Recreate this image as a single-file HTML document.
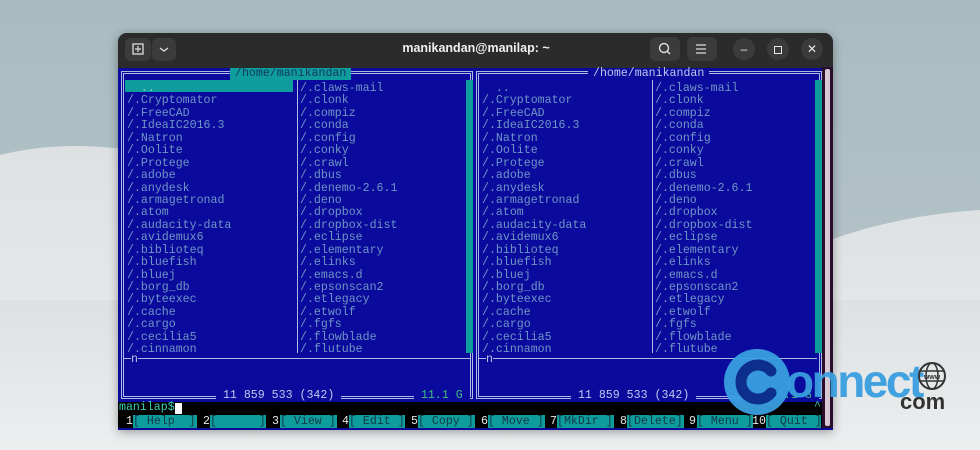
<!DOCTYPE html>
<html><head><meta charset="utf-8"><style>
*{margin:0;padding:0;box-sizing:border-box}
body{width:980px;height:450px;overflow:hidden;position:relative;background:#dfe3e5;font-family:"Liberation Mono",monospace}
.abs{position:absolute}
.t{position:absolute;font-size:11.6px;line-height:12.43px;white-space:pre;color:#7096c6}
.bd{position:absolute;border-color:#b0b8e4;border-style:solid;border-width:0}
.btn{position:absolute;background:#3b3b3b;border-radius:6px}
.cb{position:absolute;width:22px;height:22px;border-radius:50%;background:#3b3b3b;color:#e6e6e6;font-family:"Liberation Sans",sans-serif;text-align:center;line-height:22px;font-size:12px}
.fk{position:absolute;top:415px;height:13px;font-size:11.6px;line-height:13px;white-space:pre}
.fn{color:#e8e8e8}
.fl{background:#0e9c9c;color:#123a48}
</style></head><body>
<svg class="abs" style="left:0;top:0" width="980" height="450">
<defs><linearGradient id="sky" x1="0" y1="0" x2="0" y2="1"><stop offset="0" stop-color="#a9bcc1"/><stop offset="1" stop-color="#b9c6ca"/></linearGradient>
<linearGradient id="snow" x1="0" y1="0" x2="0" y2="1"><stop offset="0" stop-color="#dde1e3"/><stop offset="1" stop-color="#eceeef"/></linearGradient></defs>
<rect width="980" height="450" fill="url(#sky)"/>
<path d="M0 155 Q60 140 130 150 L130 450 L0 450Z" fill="url(#snow)"/>
<path d="M830 240 Q900 215 980 210 L980 450 L830 450Z" fill="url(#snow)"/>
<rect x="0" y="300" width="980" height="150" fill="url(#snow)"/>
</svg>
<div class="abs" style="left:118px;top:33px;width:715px;height:397px;background:#0a0a9c;border-radius:9px 9px 0 0;overflow:hidden;box-shadow:0 2px 10px rgba(0,0,0,.35)">
 <div class="abs" style="left:0;top:0;width:715px;height:35px;background:#2b2b2b"></div>
</div>
<div class="btn" style="left:125px;top:38px;width:26px;height:23px"></div>
<div class="btn" style="left:152px;top:38px;width:24px;height:23px"></div>
<svg class="abs" style="left:125px;top:38px" width="52" height="23"><rect x="8" y="6" width="10" height="10" fill="none" stroke="#ddd" stroke-width="1.3"/><path d="M13 8v6M10 11h6" stroke="#ddd" stroke-width="1.2"/><path d="M35 10l4 3 4-3" fill="none" stroke="#ddd" stroke-width="1.3"/></svg>
<div class="abs" style="left:380px;top:41px;width:192px;text-align:center;color:#f0f0f0;font:bold 12.5px 'Liberation Sans',sans-serif">manikandan@manilap: ~</div>
<div class="btn" style="left:650px;top:37px;width:30px;height:24px"></div>
<div class="btn" style="left:687px;top:37px;width:30px;height:24px"></div>
<svg class="abs" style="left:650px;top:37px" width="68" height="24"><circle cx="14" cy="11" r="4.5" fill="none" stroke="#ddd" stroke-width="1.4"/><path d="M17 14l3 3" stroke="#ddd" stroke-width="1.4"/><path d="M46 8h10M46 12h10M46 16h10" stroke="#ddd" stroke-width="1.3"/></svg>
<div class="cb" style="left:733px;top:38px">–</div>
<div class="cb" style="left:767px;top:38px"><span style="display:inline-block;width:8px;height:8px;border:1.4px solid #e6e6e6;vertical-align:middle"></span></div>
<div class="cb" style="left:801px;top:38px">✕</div>
<div class="abs" style="left:822px;top:67px;width:11px;height:361px;background:#2a0d2a"></div>
<div class="abs" style="left:825px;top:69px;width:5px;height:357px;background:#d8c8d4;border-radius:2px"></div>
<div class="abs" style="left:118px;top:402px;width:704px;height:26px;background:#000"></div>
<div class="bd" style="left:121px;top:71px;width:352px;height:328px;border-width:3px;border-style:double"></div>
<div class="bd" style="left:297px;top:80px;height:273px;border-left-width:1px"></div>
<div class="bd" style="left:124px;top:358px;width:346px;border-top-width:1px"></div>
<div class="abs" style="left:466px;top:80px;width:7px;height:273px;background:#0e9c9c"></div>
<div class="bd" style="left:476px;top:71px;width:346px;height:328px;border-width:3px;border-style:double"></div>
<div class="bd" style="left:652px;top:80px;height:273px;border-left-width:1px"></div>
<div class="bd" style="left:479px;top:358px;width:338px;border-top-width:1px"></div>
<div class="abs" style="left:815px;top:80px;width:7px;height:273px;background:#0e9c9c"></div>
<div class="t" style="left:230px;top:68px;background:#0e9c9c;color:#123a60;padding:0 5px">/home/manikandan</div>
<div class="t" style="left:588px;top:68px;background:#0a0a9c;color:#c0c8ee;padding:0 5px">/home/manikandan</div>
<div class="abs" style="left:125px;top:80px;width:168px;height:12px;background:#0e9c9c"></div>
<div class="t" style="left:127px;top:83px;color:#7096c6"><span style="color:#7fd0d0">  ..</span>
/.Cryptomator
/.FreeCAD
/.IdeaIC2016.3
/.Natron
/.Oolite
/.Protege
/.adobe
/.anydesk
/.armagetronad
/.atom
/.audacity-data
/.avidemux6
/.biblioteq
/.bluefish
/.bluej
/.borg_db
/.byteexec
/.cache
/.cargo
/.cecilia5
/.cinnamon</div>
<div class="t" style="left:482px;top:83px">  ..
/.Cryptomator
/.FreeCAD
/.IdeaIC2016.3
/.Natron
/.Oolite
/.Protege
/.adobe
/.anydesk
/.armagetronad
/.atom
/.audacity-data
/.avidemux6
/.biblioteq
/.bluefish
/.bluej
/.borg_db
/.byteexec
/.cache
/.cargo
/.cecilia5
/.cinnamon</div>
<div class="t" style="left:300px;top:83px">/.claws-mail
/.clonk
/.compiz
/.conda
/.config
/.conky
/.crawl
/.dbus
/.denemo-2.6.1
/.deno
/.dropbox
/.dropbox-dist
/.eclipse
/.elementary
/.elinks
/.emacs.d
/.epsonscan2
/.etlegacy
/.etwolf
/.fgfs
/.flowblade
/.flutube</div>
<div class="t" style="left:655px;top:83px">/.claws-mail
/.clonk
/.compiz
/.conda
/.config
/.conky
/.crawl
/.dbus
/.denemo-2.6.1
/.deno
/.dropbox
/.dropbox-dist
/.eclipse
/.elementary
/.elinks
/.emacs.d
/.epsonscan2
/.etlegacy
/.etwolf
/.fgfs
/.flowblade
/.flutube</div>
<div class="t" style="left:131px;top:354px;color:#c0c8ee;background:#0a0a9c">n</div>
<div class="t" style="left:486px;top:354px;color:#c0c8ee;background:#0a0a9c">n</div>
<div class="t" style="left:216px;top:390px;color:#c0c8ee;background:#0a0a9c"> 11 859 533 (342) </div>
<div class="t" style="left:414px;top:390px;color:#3ec07a;background:#0a0a9c"> 11.1 G </div>
<div class="t" style="left:571px;top:390px;color:#c0c8ee;background:#0a0a9c"> 11 859 533 (342) </div>
<div class="t" style="left:763px;top:390px;color:#3ec07a;background:#0a0a9c"> 11.1 G </div>
<div class="t" style="left:119px;top:402px;color:#3ad0b0">manilap$</div>
<div class="abs" style="left:175px;top:403px;width:7px;height:11px;background:#fff"></div>
<div class="t" style="left:814px;top:401px;color:#3ad0b0">^</div>
<div class="fk fn" style="left:126px">1</div><div class="fk fl" style="left:133px;width:64px">[ Help  ]</div>
<div class="fk fn" style="left:203px">2</div><div class="fk fl" style="left:210px;width:56px">[      ]</div>
<div class="fk fn" style="left:272px">3</div><div class="fk fl" style="left:280px;width:57px">[ View ]</div>
<div class="fk fn" style="left:342px">4</div><div class="fk fl" style="left:349px;width:56px">[ Edit ]</div>
<div class="fk fn" style="left:411px">5</div><div class="fk fl" style="left:418px;width:57px">[ Copy ]</div>
<div class="fk fn" style="left:481px">6</div><div class="fk fl" style="left:488px;width:57px">[ Move ]</div>
<div class="fk fn" style="left:550px">7</div><div class="fk fl" style="left:557px;width:57px">[MkDir ]</div>
<div class="fk fn" style="left:620px">8</div><div class="fk fl" style="left:627px;width:57px">[Delete]</div>
<div class="fk fn" style="left:689px">9</div><div class="fk fl" style="left:697px;width:56px">[ Menu ]</div>
<div class="fk fn" style="left:752px">10</div><div class="fk fl" style="left:766px;width:55px">[ Quit ]</div>
<svg class="abs" style="left:720px;top:345px" width="240" height="80">
<circle cx="37" cy="37" r="33" fill="#3a9fe0" opacity=".95"/>
<path d="M51 26a17 17 0 1 0 0 22" fill="none" stroke="#0c2f8c" stroke-width="11" stroke-linecap="round"/>
<text x="66" y="52" font-family="'Liberation Sans',sans-serif" font-weight="bold" font-size="46" fill="#3a9fe0" opacity=".95" letter-spacing="-2.5">onnect</text>
<circle cx="212" cy="31" r="13" fill="none" stroke="#333" stroke-width="2"/>
<ellipse cx="212" cy="31" rx="6" ry="13" fill="none" stroke="#333" stroke-width="1.5"/>
<path d="M199 26h26M199 36h26" stroke="#333" stroke-width="1.5"/>
<text x="212" y="34" text-anchor="middle" font-family="'Liberation Sans',sans-serif" font-size="7" font-weight="bold" fill="#333">www</text>
<text x="180" y="64" font-family="'Liberation Sans',sans-serif" font-size="22" font-weight="bold" fill="#333">com</text>
</svg>
</body></html>
